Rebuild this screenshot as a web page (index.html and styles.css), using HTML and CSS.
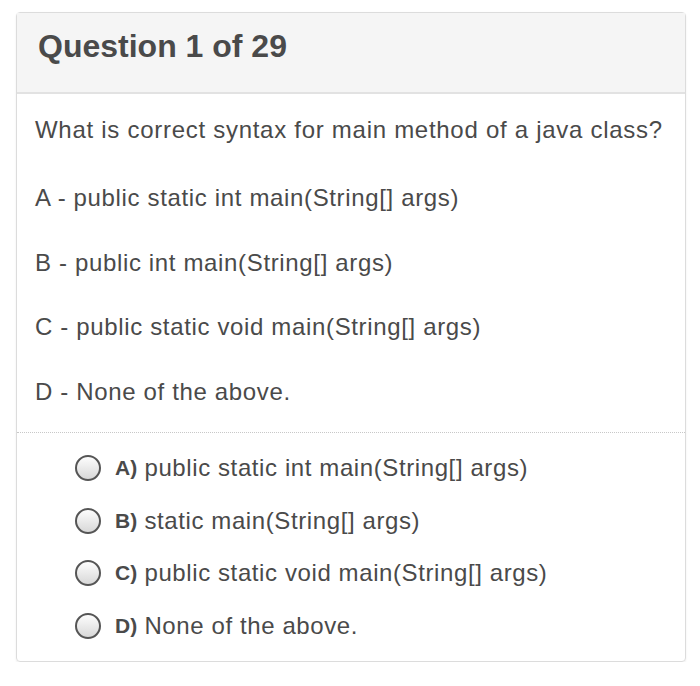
FILE: index.html
```html
<!DOCTYPE html>
<html lang="en">

<head>
    <meta charset="UTF-8">
    <meta name="viewport" content="width=device-width, initial-scale=1.0">
    <title>Question 1 of 29</title>
    <link rel="stylesheet" href="styles.css">
</head>

<body>
    <div id="quiz">
        <div class="quiz-header">
            <h2>Question 1 of 29</h2>
        </div>

        <div class="quiz-body">
            <p class="question">What is correct syntax for main method of a java class?</p>
            <p>A - public static int main(String[] args)</p>
            <p>B - public int main(String[] args)</p>
            <p>C - public static void main(String[] args)</p>
            <p>D - None of the above.</p>
        </div>

        <div class="answers">
            <label class="answer"><span class="radio"></span><b>A)</b> public static int main(String[] args)</label>
            <label class="answer"><span class="radio"></span><b>B)</b> static main(String[] args)</label>
            <label class="answer"><span class="radio"></span><b>C)</b> public static void main(String[] args)</label>
            <label class="answer"><span class="radio"></span><b>D)</b> None of the above.</label>
        </div>
    </div>
</body>

</html>
```

FILE: styles.css
```css
body {
    font-family: "Liberation Sans", Arial, sans-serif;
    background-color: #fff;
    color: #4a4a4a;
    margin: 0;
    padding: 12px 14px 0 16px;
}

#quiz {
    border: 1px solid #dcdcdc;
    border-radius: 4px;
    box-shadow: 0 1px 2px rgba(0, 0, 0, 0.08);
    height: 650px;
    box-sizing: border-box;
}

.quiz-header {
    background-color: #f5f5f5;
    border-bottom: 2px solid #e2e2e2;
    height: 81px;
    box-sizing: border-box;
    padding-left: 21px;
}

.quiz-header h2 {
    margin: 0;
    font-size: 32px;
    line-height: 66px;
    color: #4a4a4a;
}

.quiz-body {
    padding: 0 0 0 18px;
    border-bottom: 1px dotted #c8c8c8;
    height: 338px;
}

.quiz-body p {
    margin: 0;
    font-size: 24px;
    letter-spacing: 0.65px;
    height: 64.5px;
    line-height: 64.5px;
}

.quiz-body .question {
    letter-spacing: 0.72px;
    line-height: 72px;
    height: 72px;
}

.answers {
    display: flex;
    flex-direction: column;
    padding: 9px 0 0 58px;
}

.answer {
    display: flex;
    align-items: center;
    font-size: 24px;
    letter-spacing: 0.6px;
    height: 52.5px;
    white-space: pre;
}

.answer b {
    font-size: 21px;
    letter-spacing: 0;
}

.radio {
    width: 26px;
    height: 26px;
    box-sizing: border-box;
    border: 2px solid #555;
    border-radius: 50%;
    background: linear-gradient(#fdfdfd, #d8d8d8);
    margin-right: 14px;
}
```
